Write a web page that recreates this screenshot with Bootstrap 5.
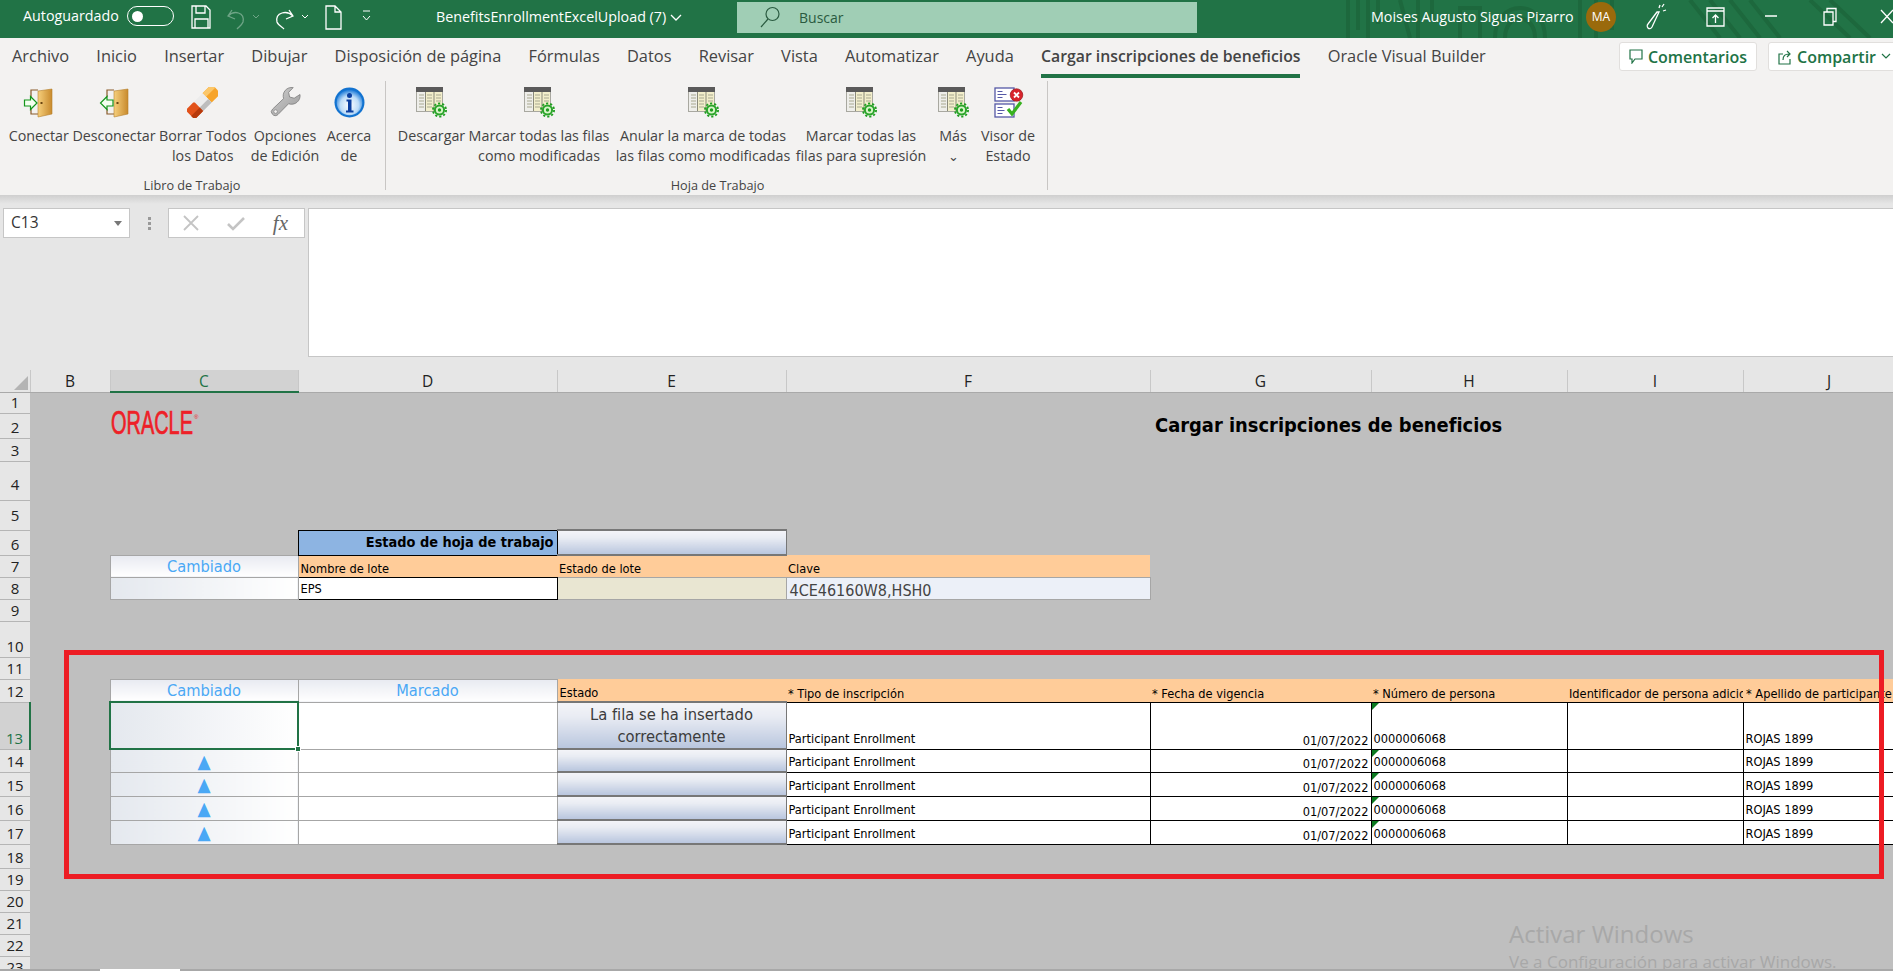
<!DOCTYPE html>
<html lang="es">
<head>
<meta charset="utf-8">
<title>BenefitsEnrollmentExcelUpload (7)</title>
<link href="https://cdn.jsdelivr.net/npm/bootstrap@5.3.0/dist/css/bootstrap.min.css" rel="stylesheet">
<style>
html,body{height:100%;overflow:hidden;background:#bfbfbf}
body{font-family:"Open Sans","Liberation Sans",sans-serif;color:#444}
.xl-title{height:38px;background:#217346;color:#fff;font-size:14.3px;position:relative;flex:none;padding-bottom:4px}
.xl-auto{margin-left:23px;width:106px;margin-bottom:2px}
.xl-toggle{width:47px;height:20px;border:1.5px solid #fff;border-radius:10px;flex:none;padding-left:4px;margin-bottom:2px;margin-left:4px}
.xl-knob{width:11px;height:11px;background:#fff;border-radius:50%}
.xl-qat{margin-left:17px;flex:none;display:block}
.xl-file{margin-left:55px;width:301px;flex:none}
.xl-search{width:460px;height:31px;background:#a0ceb5;color:#2a5a40;flex:none;padding-left:23px;gap:19px;font-size:14px}
.xl-user{margin-left:174px;width:215px;flex:none}
.xl-avatar{width:30px;height:30px;border-radius:50%;background:#9a6a0c;font-size:12px;flex:none}
.xl-win{flex:none;display:block;margin-left:14px}
.xl-pattern{position:absolute;left:1340px;top:0}
.xl-tabs{height:40px;background:#f3f2f1;flex:none;padding-left:12px;gap:27.2px;font-size:16.4px;color:#444;position:relative}
.xl-tab{white-space:nowrap;line-height:36px;height:36px}
.xl-tab-on{font-weight:600;font-size:15.8px;border-bottom:4px solid #217346;height:36px;color:#444;box-sizing:content-box;line-height:36px}
.xl-share{position:absolute;top:4px;right:-8px;gap:11px}
.xl-btn{height:29px;padding:0 9px;background:#fff;border:1px solid #e1dfdd;border-radius:3px;color:#217346;font-weight:600;font-size:16px;line-height:1;white-space:nowrap;gap:5px}
.xl-btn:hover{color:#217346;background:#fff;border-color:#e1dfdd}
.xl-ribbon{height:117px;background:#f3f2f1;flex:none;font-size:14.3px;color:#444}
.rb-group{height:109px;margin-top:3px;border-right:1px solid #c8c6c4;flex:none}
.rb-g1{width:386px;padding-left:7px}
.rb-g2{width:662px;padding-left:10px}
.rb-items{padding-top:6px;height:91px}
.rb-item{flex:none;text-align:center;line-height:20px;white-space:nowrap}
.rb-item svg{display:block;margin:0 auto 8px;width:31px;height:31px}
.rbw-a{width:63.5px}.rbw-b{width:87px}.rbw-c{width:90.5px}.rbw-d{width:74px}.rbw-e{width:54px}
.rbw-f{width:71px}.rbw-g{width:144px}.rbw-h{width:184px}.rbw-i{width:132px}.rbw-j{width:52px}.rbw-k{width:58px}
.rb-label{font-size:12.7px;text-align:center;line-height:18px;margin-top:4px;padding-right:8px}
.xl-formula{height:175px;flex:none;background:linear-gradient(#cfcfcf 0,#e6e6e6 9px);padding:13px 0 13px 3px}
.xl-name{width:127px;height:30px;background:#fff;border:1px solid #c6c6c6;padding:0 7px;font-size:15.5px;color:#333;flex:none}
.xl-caret{width:0;height:0;border:4px solid transparent;border-top:5px solid #777;border-bottom:0}
.xl-dots{width:38px;flex:none;height:30px;gap:2px}
.xl-dots i{width:3px;height:3px;background:#999;display:block}
.xl-fxbox{width:137px;height:30px;background:#fff;border:1px solid #c6c6c6;flex:none;padding:0 16px 0 14px}
.xl-fx{font-family:"Liberation Serif",serif;font-style:italic;font-size:21px;color:#666;line-height:1}
.xl-input{flex:1;height:149px;background:#fff;border:1px solid #c6c6c6;margin-left:3px;border-right:0}
.xl-sheet{flex:1;position:relative;overflow:hidden;background:#bfbfbf;min-height:0}
.xl-table{table-layout:fixed;width:1915px;border-collapse:collapse;font-family:"DejaVu Sans Condensed","Liberation Sans",sans-serif;font-size:12.7px;color:#000}
.xl-table td{padding:0 2px 3px;vertical-align:bottom;white-space:nowrap;overflow:visible;line-height:15px}
.xl-table td.ch{background:#e6e6e6;border-right:1px solid #c8c8c8;border-bottom:1px solid #a9a9a9;text-align:center;vertical-align:middle;font:15.5px/18px "Open Sans",sans-serif;color:#222;padding:0}
.xl-table td.ch-on{background:#d2d2d2;border-bottom:2px solid #217346;color:#217346}
.xl-table td.rh{background:#e6e6e6;border-bottom:1px solid #b5b5b5;text-align:center;font:15px/19px "Open Sans",sans-serif;color:#222;padding:0 0 1px;overflow:hidden}
.xl-table td.rh-on{background:#d2d2d2;border-right:2px solid #217346;color:#217346}
.xl-table td.rh-a{padding-bottom:6px}
.xl-table td.rh-b{padding-bottom:5px}
.xl-corner{width:0;height:0;border-style:solid;border-width:0 0 14px 14px;border-color:transparent transparent #b4b4b4 transparent;margin:4px 2px 0 auto}
.xl-table td.xl-title2{font-weight:700;font-size:19.9px;line-height:20px;padding:0 0 0 5px;vertical-align:middle;overflow:visible}
.xl-table td.xl-logo{padding:0;overflow:visible}
.xl-oracle{display:block;overflow:visible}
.xl-table td.c-blue{background:#8db4e2;border:1px solid #000;text-align:right;font-weight:700;font-size:14.4px;vertical-align:middle;padding:0 3px 0 0}
.xl-table td.c-btn{background:linear-gradient(#f3f4f8,#e9ecf3 30%,#b9c6de);border:1px solid #777;border-top-width:2px;border-bottom-width:2px;text-align:center;color:#3c3c3c;font-size:16.4px;white-space:normal;line-height:22px;vertical-align:middle;padding:0 30px}
.xl-table td.c-chg{border:1px solid #a6a6a6;background:linear-gradient(#e8eaf1,#fff);color:#4aa8f5;text-align:center;font-size:16.3px;vertical-align:middle;padding:0}
.xl-table td.c-sel{border:1px solid #a6a6a6;background:linear-gradient(90deg,#e4e8ee,#fff);color:#4aa8f5;text-align:center;vertical-align:middle;font-size:19px;line-height:20px;padding:0}
.xl-table td.c-org{background:#fc9;padding-bottom:1px}
.xl-table td.c-lastcol{padding-left:3px}
.c-blk{background:#fff;border:1px solid #000}
.c-gr{background:#fff;border:1px solid #a6a6a6}
.c-beige{background:#e9e6d2;border:1px solid #a6a6a6}
.xl-table td.c-key{background:#ecf0f8;border:1px solid #a6a6a6;font-size:16px;color:#444;padding:0 0 1px 3px}
.xl-table td.c-date{text-align:right;padding-bottom:1px;line-height:14px}
.c-note{position:relative}
.c-note::before{content:"";position:absolute;left:0;top:0;border-style:solid;border-width:7px 7px 0 0;border-color:#0b7a20 transparent transparent transparent}
.xl-table td.c-active{position:relative;border:2px solid #217346}
.c-active::after{content:"";position:absolute;right:-4px;bottom:-4px;background:#217346;border:1px solid #fff;width:6px;height:6px}
.xl-table td.c-clip{overflow:hidden}
.xl-redbox{position:absolute;left:64px;top:280px;width:1820px;height:229px;border:5px solid #ed1c24;pointer-events:none}
.xl-water{position:absolute;left:1509px;top:548px;color:#a8a8a8;font-family:"Open Sans",sans-serif;white-space:nowrap}
.xl-water b{display:block;font-weight:400;font-size:24px;line-height:32px}
.xl-water span{display:block;font-size:17px;line-height:24px}
.xl-strip{position:absolute;left:0;right:0;bottom:0;height:2px;background:#a8a8a8}
.xl-sheettab{position:absolute;left:100px;bottom:0;width:80px;height:2px;background:#fff}
.r21{height:21px}.r22{height:22px}.r23{height:23px}.r24{height:24px}.r25{height:25px}.r30{height:30px}.r36{height:36px}.r39{height:39px}.r47{height:47px}
.w-a{width:30px}.w-b{width:80px}.w-c{width:188px}.w-d{width:259px}.w-e{width:229px}.w-f{width:364px}.w-g{width:221px}.w-h{width:196px}.w-i{width:176px}.w-j{width:172px}
</style>
</head>
<body class="d-flex flex-column">
<svg width="0" height="0" class="position-absolute">
<defs>
<linearGradient id="gdoor" x1="0" x2="1" y1="0" y2="0"><stop offset="0" stop-color="#f6cf7c"/><stop offset="1" stop-color="#c88a2c"/></linearGradient>
<radialGradient id="ginfo" cx=".5" cy=".6" r=".6"><stop offset="0" stop-color="#fff"/><stop offset=".6" stop-color="#bcdcf8"/><stop offset="1" stop-color="#1878d8"/></radialGradient>
<linearGradient id="gwr" x1="0" x2="1" y1="0" y2="1"><stop offset="0" stop-color="#d0d0d0"/><stop offset="1" stop-color="#9a9a9a"/></linearGradient>
<symbol id="i-tblgear" viewBox="0 0 31 31">
<rect x=".5" y=".5" width="26" height="24" fill="#f2eecb" stroke="#a8a8a0"/>
<rect x="0" y="0" width="27" height="5" fill="#5a5a5a"/>
<rect x="1" y="5" width="8" height="19" fill="#eeeeea"/>
<path d="M9.500 5v19M18 5v19" stroke="#8a8a7a"/>
<path d="M3 8h5M3 11h5M3 14h5M3 17h5M3 20h5M11 8h5M11 11h5M11 14h5M11 17h5M11 20h5M20 8h5M20 11h5M20 14h5" stroke="#a8a890" stroke-width="1"/>
<circle cx="23.5" cy="23" r="5.6" fill="#2aa52a"/>
<circle cx="23.5" cy="23" r="6.6" fill="none" stroke="#1f9d1f" stroke-width="1.8" stroke-dasharray="2.2 2"/>
<circle cx="23.5" cy="23" r="3.6" fill="#d8f5c8"/>
<circle cx="23.5" cy="23" r="1.7" fill="#1f9d1f"/>
</symbol>
<symbol id="i-doorin" viewBox="0 0 31 31">
<path d="M15 3H8v7M8 22v5h7" fill="none" stroke="#8a5a2a" stroke-width="1.2"/>
<polygon points="15,4 29,2 29,27 15,30" fill="url(#gdoor)" stroke="#b57f2c" stroke-width=".6"/>
<rect x="17.5" y="15" width="2" height="2" fill="#6a4410"/>
<path d="M1.500 13H7.500V9.500L14 16L7.500 22.500V19H1.500Z" fill="#f4fff0" stroke="#13961b" stroke-width="1.2"/>
</symbol>
<symbol id="i-doorout" viewBox="0 0 31 31">
<path d="M15 3H8v7M8 22v5h7" fill="none" stroke="#8a5a2a" stroke-width="1.2"/>
<polygon points="15,4 29,2 29,27 15,30" fill="url(#gdoor)" stroke="#b57f2c" stroke-width=".6"/>
<rect x="17.5" y="15" width="2" height="2" fill="#6a4410"/>
<path d="M14 13H8V9.500L1.500 16L8 22.500V19H14Z" fill="#f4fff0" stroke="#13961b" stroke-width="1.2"/>
</symbol>
<symbol id="i-eraser" viewBox="0 0 31 31">
<g transform="rotate(45 15.5 15.5)">
<rect x="9" y="-4" width="13" height="13" fill="#f7a42a"/>
<rect x="9" y="-4" width="5" height="13" fill="#fbc76a"/>
<rect x="9" y="9" width="13" height="12" fill="#ececec"/>
<rect x="17" y="9" width="5" height="12" fill="#bdbdbd"/>
<rect x="9" y="21" width="13" height="12" rx="1.5" fill="#e2521a"/>
<rect x="17" y="21" width="5" height="12" fill="#b63a0c"/>
</g>
</symbol>
<symbol id="i-wrench" viewBox="0 0 31 31">
<path d="M30 7.500a8.500 8.500 0 0 1-11.400 9.200L8 27.500a3.600 3.600 0 0 1-5.500-.2 3.600 3.600 0 0 1 .1-5.200L13.600 11.600A8.500 8.500 0 0 1 23.200 .6L18.600 5.400l1 4.600 4.600 1.200z" fill="url(#gwr)" stroke="#7c7c7c" stroke-width=".8"/>
<circle cx="5.6" cy="24.6" r="1.8" fill="#f3f2f1" stroke="#777" stroke-width=".6"/>
</symbol>
<symbol id="i-info" viewBox="0 0 31 31">
<circle cx="15.5" cy="15.5" r="15" fill="#1273d0"/>
<circle cx="15.5" cy="15.5" r="12.8" fill="url(#ginfo)"/>
<circle cx="15.5" cy="8.5" r="2.5" fill="#0a3fa0"/>
<path d="M12.500 12.500h5v11h2v2h-7.500v-2h2v-9h-1.500z" fill="#0a3fa0"/>
</symbol>
<symbol id="i-status" viewBox="0 0 31 31">
<rect x="2" y="1" width="19" height="13" fill="#fff" stroke="#5558a6" stroke-width="1.3"/>
<path d="M4.500 4.500h5M4.500 7.500h9M4.500 10.500h5" stroke="#5558a6"/>
<rect x="2" y="17" width="19" height="13" fill="#fff" stroke="#5558a6" stroke-width="1.3"/>
<path d="M4.500 20.500h5M4.500 23.500h7M4.500 26.500h5" stroke="#5558a6"/>
<circle cx="23.5" cy="8" r="6.3" fill="#d8242c" stroke="#8c1016" stroke-width=".6"/>
<path d="M21 5.500l5 5M26 5.500l-5 5" stroke="#fff" stroke-width="1.8"/>
<path d="M15 22l4 5 9-12" fill="none" stroke="#37b11f" stroke-width="3.2"/>
</symbol>
</defs>
</svg>

<header class="xl-title d-flex align-items-center">
<svg class="xl-pattern" width="553" height="38" viewBox="0 0 553 38" fill="none" stroke="#1d683d" stroke-width="4">
<path d="M8 0v38M18 0v30M28 0v38M38 0v24M60 0l10 38M78 0v38M92 0v20M120 38V8h20v30M165 38c0-26 30-26 30 0M155 38c0-40 50-40 50 0M240 0v38M256 0v38M272 0v30M350 0l30 38M370 0l30 38M390 0l30 38M410 0l30 38M470 0l40 38M490 0l40 38"/>
</svg>
<div class="xl-auto text-nowrap position-relative">Autoguardado</div>
<div class="xl-toggle d-flex align-items-center position-relative"><span class="xl-knob"></span></div>
<svg class="xl-qat position-relative" width="190" height="30" viewBox="0 0 190 30" fill="none" stroke="#fff" stroke-width="1.3" role="img" aria-label="Barra de acceso rápido">
<path d="M1 4h14l4 4v18H1zM5 4v7h9V4M4 26v-9h13v9"/>
<g transform="translate(15 0)"><path d="M26 8l-4 6 7 3M22 14c6-6 17-4 15 6-1 3-4 5-6 7" stroke="#6fa587"/><path d="M47 13l3 3 3-3" stroke="#6fa587" stroke-width="1"/></g>
<path d="M100 8l4 6-7 3M104 14c-6-6-18-4-16 6 1 3 5 5 7 7" transform="translate(-2 0)"/>
<path d="M111 13l3 3 3-3" stroke-width="1"/>
<path d="M135 4h9l6 6v17h-15zM144 4v6h6"/>
<path d="M172 9h7M172 14l3.500 4 3.500-4" stroke-width="1"/>
</svg>
<div class="xl-file text-nowrap position-relative">BenefitsEnrollmentExcelUpload (7) <svg width="12" height="8" viewBox="0 0 12 8" fill="none" stroke="#fff" stroke-width="1.3"><path d="M1 1l5 5 5-5"/></svg></div>
<div class="xl-search d-flex align-items-center position-relative">
<svg width="20" height="22" viewBox="0 0 20 22" fill="none" stroke="#2a5a40" stroke-width="1.2"><circle cx="12.5" cy="8" r="6.500"/><path d="M8 13L1 21"/></svg>
<span>Buscar</span></div>
<div class="xl-user text-nowrap position-relative">Moises Augusto Siguas Pizarro</div>
<div class="xl-avatar d-flex align-items-center justify-content-center position-relative">MA</div>
<svg class="xl-win position-relative" width="263" height="30" viewBox="0 0 263 30" fill="none" stroke="#fff" stroke-width="1.3" role="img" aria-label="Ventana">
<path d="M29 10l-7 15c-1 2-3 2-4 1s-1-3 0-4l9-12zM29 6l1-3M33 9l3-1M32 5l2-3"/>
<path d="M77 6h17v18H77zM77 9h17M85.500 21v-8M82.500 16l3-3 3 3"/>
<path d="M135 14h12" stroke-width="1.5"/>
<path d="M194 10h9v13h-9zM197 10V6.500h9v13h-3"/>
<path d="M251 8l12 13M263 8l-12 13"/>
</svg>
</header>

<nav class="xl-tabs d-flex align-items-start">
<span class="xl-tab">Archivo</span><span class="xl-tab">Inicio</span><span class="xl-tab">Insertar</span><span class="xl-tab">Dibujar</span><span class="xl-tab">Disposición de página</span><span class="xl-tab">Fórmulas</span><span class="xl-tab">Datos</span><span class="xl-tab">Revisar</span><span class="xl-tab">Vista</span><span class="xl-tab">Automatizar</span><span class="xl-tab">Ayuda</span><span class="xl-tab-on text-nowrap">Cargar inscripciones de beneficios</span><span class="xl-tab">Oracle Visual Builder</span>
<div class="xl-share d-flex">
<button type="button" class="btn xl-btn d-flex align-items-center"><svg width="14" height="15" viewBox="0 0 14 15" fill="none" stroke="#217346" stroke-width="1.2"><path d="M1 1h12v9H6l-3 4v-4H1z"/></svg>Comentarios</button>
<button type="button" class="btn xl-btn d-flex align-items-center"><svg width="14" height="16" viewBox="0 0 14 16" fill="none" stroke="#217346" stroke-width="1.2"><path d="M5 5H1v10h11v-5M5 11c0-4 2-6 6-6M9 2l3 3-3 3"/></svg>Compartir <svg width="10" height="7" viewBox="0 0 10 7" fill="none" stroke="#217346" stroke-width="1.2"><path d="M1 1l4 4 4-4"/></svg></button>
</div>
</nav>

<section class="xl-ribbon d-flex">
<div class="rb-group rb-g1">
<div class="rb-items d-flex">
<div class="rb-item rbw-a"><svg><use href="#i-doorin"/></svg>Conectar</div>
<div class="rb-item rbw-b"><svg><use href="#i-doorout"/></svg>Desconectar</div>
<div class="rb-item rbw-c"><svg><use href="#i-eraser"/></svg>Borrar Todos<br>los Datos</div>
<div class="rb-item rbw-d"><svg><use href="#i-wrench"/></svg>Opciones<br>de Edición</div>
<div class="rb-item rbw-e"><svg><use href="#i-info"/></svg>Acerca<br>de</div>
</div>
<div class="rb-label">Libro de Trabajo</div>
</div>
<div class="rb-group rb-g2">
<div class="rb-items d-flex">
<div class="rb-item rbw-f"><svg><use href="#i-tblgear"/></svg>Descargar</div>
<div class="rb-item rbw-g"><svg><use href="#i-tblgear"/></svg>Marcar todas las filas<br>como modificadas</div>
<div class="rb-item rbw-h"><svg><use href="#i-tblgear"/></svg>Anular la marca de todas<br>las filas como modificadas</div>
<div class="rb-item rbw-i"><svg><use href="#i-tblgear"/></svg>Marcar todas las<br>filas para supresión</div>
<div class="rb-item rbw-j"><svg><use href="#i-tblgear"/></svg>Más<br><span class="small">⌄</span></div>
<div class="rb-item rbw-k"><svg><use href="#i-status"/></svg>Visor de<br>Estado</div>
</div>
<div class="rb-label">Hoja de Trabajo</div>
</div>
</section>

<section class="xl-formula d-flex align-items-start">
<div class="xl-name d-flex align-items-center justify-content-between">C13<span class="xl-caret"></span></div>
<div class="xl-dots d-flex flex-column align-items-center justify-content-center"><i></i><i></i><i></i></div>
<div class="xl-fxbox d-flex align-items-center justify-content-between">
<svg width="16" height="16" viewBox="0 0 16 16" fill="none" stroke="#c4c4c4" stroke-width="1.8"><path d="M1 1l14 14M15 1L1 15"/></svg>
<svg width="18" height="15" viewBox="0 0 18 15" fill="none" stroke="#c4c4c4" stroke-width="2.6"><path d="M1 8l5 5L17 2"/></svg>
<span class="xl-fx">fx</span>
</div>
<div class="xl-input"></div>
</section>

<main class="xl-sheet">
<table class="xl-table">
<colgroup><col class="w-a"><col class="w-b"><col class="w-c"><col class="w-d"><col class="w-e"><col class="w-f"><col class="w-g"><col class="w-h"><col class="w-i"><col class="w-j"></colgroup>
<tr class="r22"><td class="ch"><div class="xl-corner"></div></td><td class="ch">B</td><td class="ch ch-on">C</td><td class="ch">D</td><td class="ch">E</td><td class="ch">F</td><td class="ch">G</td><td class="ch">H</td><td class="ch">I</td><td class="ch">J</td></tr>
<tr class="r21"><td class="rh">1</td><td colspan="9"></td></tr>
<tr class="r25"><td class="rh">2</td><td></td><td class="xl-logo"><svg class="xl-oracle" width="90" height="25" viewBox="0 0 90 25"><text x="1" y="21" font-family="Liberation Sans, sans-serif" font-size="33" fill="#ee2027" stroke="#ee2027" stroke-width=".7" textLength="82" lengthAdjust="spacingAndGlyphs">ORACLE</text><text x="84" y="6" font-family="Liberation Sans, sans-serif" font-size="6" fill="#ee2027">®</text></svg></td><td></td><td></td><td></td><td class="xl-title2">Cargar inscripciones de beneficios</td><td></td><td></td><td></td></tr>
<tr class="r23"><td class="rh">3</td><td colspan="9"></td></tr>
<tr class="r39"><td class="rh rh-a">4</td><td colspan="9"></td></tr>
<tr class="r30"><td class="rh rh-b">5</td><td colspan="9"></td></tr>
<tr class="r25"><td class="rh">6</td><td></td><td></td><td class="c-blue">Estado de hoja de trabajo</td><td class="c-btn"></td><td colspan="5"></td></tr>
<tr class="r22"><td class="rh">7</td><td></td><td class="c-chg">Cambiado</td><td class="c-org">Nombre de lote</td><td class="c-org">Estado de lote</td><td class="c-org">Clave</td><td colspan="4"></td></tr>
<tr class="r22"><td class="rh">8</td><td></td><td class="c-sel"></td><td class="c-blk">EPS</td><td class="c-beige"></td><td class="c-key">4CE46160W8,HSH0</td><td colspan="4"></td></tr>
<tr class="r22"><td class="rh">9</td><td colspan="9"></td></tr>
<tr class="r36"><td class="rh">10</td><td colspan="9"></td></tr>
<tr class="r22"><td class="rh">11</td><td colspan="9"></td></tr>
<tr class="r23"><td class="rh">12</td><td></td><td class="c-chg">Cambiado</td><td class="c-chg">Marcado</td><td class="c-org">Estado</td><td class="c-org">* Tipo de inscripción</td><td class="c-org">* Fecha de vigencia</td><td class="c-org">* Número de persona</td><td class="c-org c-clip">Identificador de persona adicional</td><td class="c-org c-lastcol">* Apellido de participante</td></tr>
<tr class="r47"><td class="rh rh-on">13</td><td></td><td class="c-sel c-active"></td><td class="c-gr"></td><td class="c-btn">La fila se ha insertado correctamente</td><td class="c-blk">Participant Enrollment</td><td class="c-blk c-date">01/07/2022</td><td class="c-blk c-note">0000006068</td><td class="c-blk"></td><td class="c-blk">ROJAS 1899</td></tr>
<tr class="r23"><td class="rh">14</td><td></td><td class="c-sel">▲</td><td class="c-gr"></td><td class="c-btn"></td><td class="c-blk">Participant Enrollment</td><td class="c-blk c-date">01/07/2022</td><td class="c-blk c-note">0000006068</td><td class="c-blk"></td><td class="c-blk">ROJAS 1899</td></tr>
<tr class="r24"><td class="rh">15</td><td></td><td class="c-sel">▲</td><td class="c-gr"></td><td class="c-btn"></td><td class="c-blk">Participant Enrollment</td><td class="c-blk c-date">01/07/2022</td><td class="c-blk c-note">0000006068</td><td class="c-blk"></td><td class="c-blk">ROJAS 1899</td></tr>
<tr class="r24"><td class="rh">16</td><td></td><td class="c-sel">▲</td><td class="c-gr"></td><td class="c-btn"></td><td class="c-blk">Participant Enrollment</td><td class="c-blk c-date">01/07/2022</td><td class="c-blk c-note">0000006068</td><td class="c-blk"></td><td class="c-blk">ROJAS 1899</td></tr>
<tr class="r24"><td class="rh">17</td><td></td><td class="c-sel">▲</td><td class="c-gr"></td><td class="c-btn"></td><td class="c-blk">Participant Enrollment</td><td class="c-blk c-date">01/07/2022</td><td class="c-blk c-note">0000006068</td><td class="c-blk"></td><td class="c-blk">ROJAS 1899</td></tr>
<tr class="r24"><td class="rh">18</td><td colspan="9"></td></tr>
<tr class="r22"><td class="rh">19</td><td colspan="9"></td></tr>
<tr class="r22"><td class="rh">20</td><td colspan="9"></td></tr>
<tr class="r22"><td class="rh">21</td><td colspan="9"></td></tr>
<tr class="r22"><td class="rh">22</td><td colspan="9"></td></tr>
<tr class="r22"><td class="rh">23</td><td colspan="9"></td></tr>
</table>
<div class="xl-redbox"></div>
<div class="xl-water"><b>Activar Windows</b><span>Ve a Configuración para activar Windows.</span></div>
<div class="xl-strip"></div><div class="xl-sheettab"></div>
</main>
<script src="https://cdn.jsdelivr.net/npm/bootstrap@5.3.0/dist/js/bootstrap.bundle.min.js"></script>
</body>
</html>
